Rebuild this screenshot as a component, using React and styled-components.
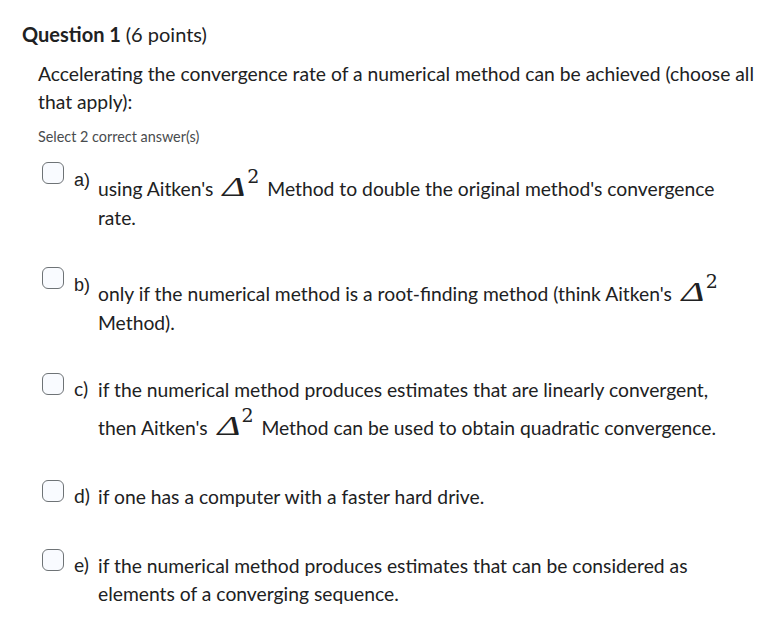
import styled, { createGlobalStyle } from "styled-components";

const GlobalStyle = createGlobalStyle`
    html, body {
        margin: 0;
        padding: 0;
        background: #ffffff;
    }
    body {
        font-family: Lato, "Noto Sans", sans-serif;
        color: #202122;
    }
`;

const Page = styled.div`
    width: 776px;
    height: 642px;
    padding: 21px 0 0 22px;
    box-sizing: border-box;
`;

const Title = styled.h2`
    margin: 0;
    font-size: 20px;
    line-height: 26px;
    font-weight: 700;
    color: #202122;
    span {
        font-weight: 400;
    }
`;

const Prompt = styled.p`
    margin: 13px 0 0 16px;
    font-size: 19.3px;
    line-height: 28px;
    width: 735px;
`;

const Hint = styled.div`
    margin: 11px 0 0 16px;
    font-size: 14.4px;
    line-height: 20px;
    color: #494c4e;
`;

const Options = styled.div`
    margin: 15px 0 0 20px;
    display: flex;
    flex-direction: column;
`;

const Option = styled.div`
    display: grid;
    grid-template-columns: 22px 34px 1fr;
    align-items: start;
    margin-top: ${({ gap }) => gap}px;
`;

const Box = styled.span`
    width: 22px;
    height: 22px;
    box-sizing: border-box;
    border: 1.5px solid #6e7376;
    border-radius: 6px;
    background: #f9fbff;
`;

const Letter = styled.span`
    padding-left: 10px;
    font-family: ${({ arial }) => (arial ? '"Liberation Sans", Arial, sans-serif' : 'Lato, sans-serif')};
    font-size: ${({ arial }) => (arial ? 18 : 19.3)}px;
    line-height: ${({ arial }) => (arial ? 30 : 34)}px;
    margin-top: ${({ arial }) => (arial ? 3 : -1)}px;
`;

const Text = styled.div`
    font-size: 19.3px;
    line-height: 28px;
    width: 640px;
    margin-top: 3px;
`;

const Math = styled.span`
    display: inline-block;
    font-family: "Liberation Serif", "Times New Roman", serif;
    line-height: 28px;
    padding-top: 8px;
    margin: 0 3px 0 3px;
`;

const Delta = styled.i`
    display: inline-block;
    font-size: 27px;
    line-height: 28px;
    transform: scaleX(1.45);
    margin: 0 5px 0 5px;
`;

const Sup = styled.sup`
    font-family: "DejaVu Serif", serif;
    font-size: 19px;
    vertical-align: 13px;
    line-height: 0;
`;

const Aitken = () => (
    <Math>
        <Delta>Δ</Delta>
        <Sup>2</Sup>
    </Math>
);

const App = () => {
    return (
        <>
            <GlobalStyle />
            <Page>
                <Title>
                    Question 1 <span>(6 points)</span>
                </Title>
                <Prompt>
                    Accelerating the convergence rate of a numerical method can be achieved (choose all that apply):
                </Prompt>
                <Hint>Select 2 correct answer(s)</Hint>
                <Options>
                    <Option gap={0}>
                        <Box />
                        <Letter arial>a)</Letter>
                        <Text>
                            using Aitken's <Aitken /> Method to double the original method's convergence rate.
                        </Text>
                    </Option>
                    <Option gap={35}>
                        <Box />
                        <Letter arial>b)</Letter>
                        <Text>
                            only if the numerical method is a root-finding method (think Aitken's <Aitken /> Method).
                        </Text>
                    </Option>
                    <Option gap={36}>
                        <Box />
                        <Letter>c)</Letter>
                        <Text>
                            if the numerical method produces estimates that are linearly convergent, then Aitken's <Aitken /> Method can be used to obtain quadratic convergence.
                        </Text>
                    </Option>
                    <Option gap={37}>
                        <Box />
                        <Letter>d)</Letter>
                        <Text>if one has a computer with a faster hard drive.</Text>
                    </Option>
                    <Option gap={36}>
                        <Box />
                        <Letter>e)</Letter>
                        <Text>
                            if the numerical method produces estimates that can be considered as elements of a converging sequence.
                        </Text>
                    </Option>
                </Options>
            </Page>
        </>
    );
};

export default App;
